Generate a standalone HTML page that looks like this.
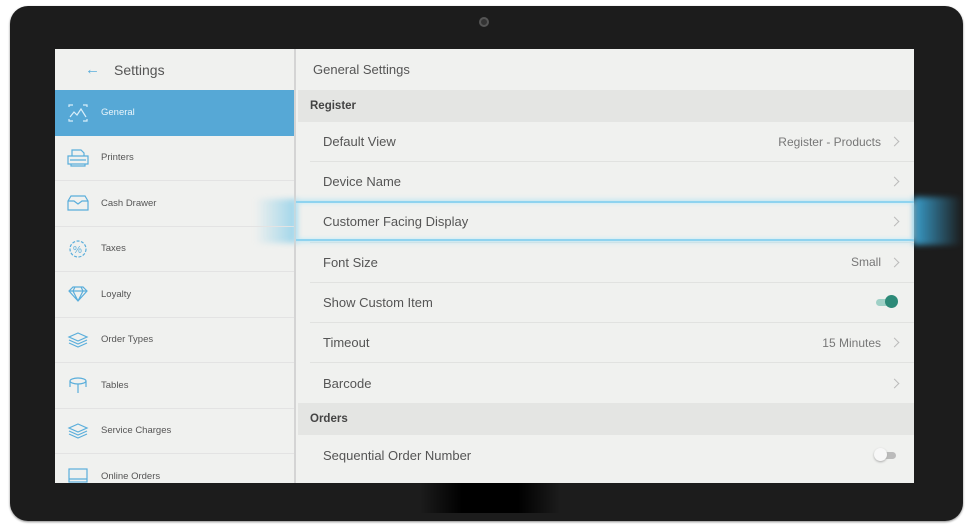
<!DOCTYPE html>
<html><head><meta charset="utf-8"><style>
*{box-sizing:border-box;margin:0;padding:0}
body{width:967px;height:531px;background:#fff;position:relative;overflow:hidden;font-family:"Liberation Sans",sans-serif}
.bezel{position:absolute;left:10px;top:6px;width:953px;height:515px;background:#1c1c1c;border-radius:18px;box-shadow:0 1px 2px #888}
.cam{position:absolute;left:479px;top:17px;width:10px;height:10px;border-radius:50%;background:#333;border:2px solid #555}
.chin{position:absolute;left:420px;top:483px;width:140px;height:30px;background:linear-gradient(90deg,#1c1c1c,#000 30%,#000 70%,#1c1c1c)}
.screen{position:absolute;left:55px;top:49px;width:859px;height:434px;background:#f0f1ef;overflow:visible}
.side{position:absolute;left:0;top:0;width:241px;height:434px;border-right:2px solid #d4d4d4;overflow:hidden}
.stitle{height:41px;display:flex;align-items:center;padding-left:30px;font-size:14px;color:#555}
.stitle span.ar{color:#5aaedb;font-size:15px;margin-right:14px}
.si{height:45.5px;display:flex;align-items:center;padding-left:12px;font-size:9.5px;color:#555;border-bottom:1px solid #e3e3e3}
.si svg{width:22px;height:20px;margin-right:12px}
.si.act{background:#56a8d6;color:#eaf5fb;border-bottom:none}
.main{position:absolute;left:243px;top:0;width:616px;height:434px}
.mh{height:41px;display:flex;align-items:center;padding-left:15px;font-size:13px;color:#555}
.sec{height:32px;background:#e4e5e3;display:flex;align-items:center;padding-left:12px;font-size:11.5px;font-weight:bold;color:#444}
.row{height:40.2px;margin-left:12px;display:flex;align-items:center;padding-left:13px;padding-right:16px;font-size:13px;color:#555;border-bottom:1px solid #e1e2e0;position:relative}
.row .v{margin-left:auto;font-size:12px;color:#777}
.row .ch{width:7px;height:7px;border-top:1.2px solid #bbb;border-right:1.2px solid #bbb;transform:rotate(45deg);margin-left:10px}
.glow{position:absolute;left:241px;top:152px;width:618px;height:40px;border-top:2px solid #8fd3ef;border-bottom:2px solid #8fd3ef;box-shadow:0 0 6px #a9e1f5, inset 0 0 4px #bde9f8}
.gl{position:absolute;left:200px;top:150px;width:42px;height:44px;background:linear-gradient(90deg,rgba(90,190,230,0),rgba(90,190,230,.55));filter:blur(3px)}
.gr{position:absolute;left:859px;top:148px;width:48px;height:48px;background:linear-gradient(90deg,rgba(60,170,220,.9),rgba(40,120,170,0));filter:blur(3px)}
.tog{margin-left:auto;position:relative;width:22px;height:14px}
.tog .t{position:absolute;left:0;top:4px;width:20px;height:7px;border-radius:4px}
.tog .k{position:absolute;top:0;width:13px;height:13px;border-radius:50%}
</style></head><body>
<div class="bezel"></div>
<div class="cam"></div>
<div class="chin"></div>
<div class="screen">
 <div class="gl"></div><div class="gr"></div>
 <div class="side">
  <div class="stitle"><span class="ar">←</span>Settings</div>
  <div class="si act"><svg viewBox="0 0 22 20" fill="none" stroke="#d8eefa" stroke-width="1.2"><path d="M2 4V2h4M16 2h4v2M2 16v2h4M16 18h4v-2"/><path d="M3 14l4-5 3 3 4-6 5 8"/></svg>General</div>
  <div class="si"><svg viewBox="0 0 22 20" fill="none" stroke="#5aaedb" stroke-width="1.2"><path d="M5 8V2h9l3 3v3M1 8h20v8H1zM3 12h16M4 16v2h14v-2"/></svg>Printers</div>
  <div class="si"><svg viewBox="0 0 22 20" fill="none" stroke="#5aaedb" stroke-width="1.2"><path d="M1 8l3-5h14l3 5v9H1zM1 8h6l4 3 4-3h6"/></svg>Cash Drawer</div>
  <div class="si"><svg viewBox="0 0 22 20" fill="none" stroke="#5aaedb" stroke-width="1.2"><circle cx="11" cy="10" r="8" stroke-dasharray="3 1.5"/><text x="6" y="14" font-size="10" fill="#5aaedb" stroke="none" font-family="Liberation Sans">%</text></svg>Taxes</div>
  <div class="si"><svg viewBox="0 0 22 20" fill="none" stroke="#5aaedb" stroke-width="1.2"><path d="M2 7l4-4h10l4 4-9 10zM2 7h18M8 3l-2 4 5 10M14 3l2 4-5 10"/></svg>Loyalty</div>
  <div class="si"><svg viewBox="0 0 22 20" fill="none" stroke="#5aaedb" stroke-width="1.2"><path d="M11 3l9 4-9 4-9-4zM2 10l9 4 9-4M2 13l9 4 9-4"/></svg>Order Types</div>
  <div class="si"><svg viewBox="0 0 22 20" fill="none" stroke="#5aaedb" stroke-width="1.2"><ellipse cx="11" cy="6" rx="8" ry="3"/><path d="M3 6v6M19 6v6M11 9v9"/></svg>Tables</div>
  <div class="si"><svg viewBox="0 0 22 20" fill="none" stroke="#5aaedb" stroke-width="1.2"><path d="M11 3l9 4-9 4-9-4zM2 10l9 4 9-4M2 13l9 4 9-4"/></svg>Service Charges</div>
  <div class="si"><svg viewBox="0 0 22 20" fill="none" stroke="#5aaedb" stroke-width="1.2"><rect x="2" y="3" width="18" height="13"/><path d="M2 13h18"/></svg>Online Orders</div>
 </div>
 <div class="main">
  <div class="mh">General Settings</div>
  <div class="sec">Register</div>
  <div class="row">Default View<span class="v">Register - Products</span><span class="ch"></span></div>
  <div class="row">Device Name<span class="v"></span><span class="ch"></span></div>
  <div class="row">Customer Facing Display<span class="v"></span><span class="ch"></span></div>
  <div class="row">Font Size<span class="v">Small</span><span class="ch"></span></div>
  <div class="row">Show Custom Item<span class="tog"><span class="t" style="background:#9fd0c6"></span><span class="k" style="left:9px;background:#2d8a78"></span></span></div>
  <div class="row">Timeout<span class="v">15 Minutes</span><span class="ch"></span></div>
  <div class="row" style="border-bottom:none">Barcode<span class="v"></span><span class="ch"></span></div>
  <div class="sec">Orders</div>
  <div class="row" style="border-bottom:none">Sequential Order Number<span class="tog"><span class="t" style="background:#bbb"></span><span class="k" style="left:-2px;background:#f7f7f7;box-shadow:0 1px 2px #aaa"></span></span></div>
 </div>
 <div class="glow"></div>
</div>
</body></html>
